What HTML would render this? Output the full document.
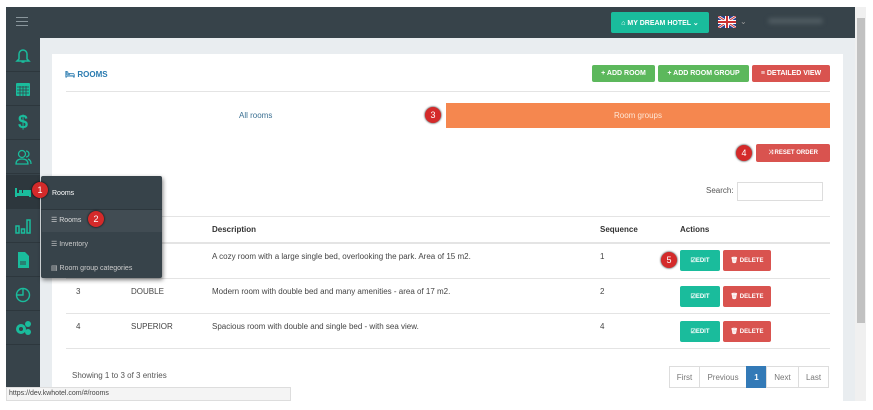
<!DOCTYPE html><html><head><style>
*{margin:0;padding:0;box-sizing:border-box}
body{width:873px;height:410px;background:#fff;font-family:"Liberation Sans",sans-serif;position:relative;overflow:hidden;font-size:8px;color:#444}
.a{position:absolute}
.btn{position:absolute;color:#fff;font-weight:bold;font-size:7px;display:flex;align-items:center;justify-content:center;border-radius:2px}
.g{background:#5cb85c}.r{background:#d9534f}.t{background:#1abc9c}
.badge{position:absolute;width:16px;height:16px;border-radius:50%;background:#d42a2a;color:#fff;font-size:9px;display:flex;align-items:center;justify-content:center;box-shadow:0 0 2px #000}
.sb{position:absolute;left:6px;width:34px;height:34px;border-bottom:1px solid #2d373d;display:flex;align-items:center;justify-content:center}
.sb svg{width:18px;height:18px}
.line{position:absolute;left:66px;width:764px;height:1px;background:#e4e4e4}
.pg{position:absolute;top:366px;height:22px;border:1px solid #ddd;display:flex;align-items:center;justify-content:center;color:#777;font-size:8px;background:#fff}
</style></head><body>
<div class="a" style="left:6px;top:7px;width:849px;height:31px;background:#37434a"></div>
<div class="a" style="left:16px;top:17px;width:12px;height:1px;background:#8a969c;box-shadow:0 4px 0 #8a969c,0 8px 0 #8a969c"></div>
<div class="btn t" style="left:611px;top:12px;width:98px;height:21px">⌂ MY DREAM HOTEL ⌄</div>
<svg class="a" style="left:718px;top:16px" width="18" height="12" viewBox="0 0 18 12"><rect width="18" height="12" fill="#2a3f8f"/><path d="M0 0L18 12M18 0L0 12" stroke="#fff" stroke-width="2.5"/><path d="M0 0L18 12M18 0L0 12" stroke="#c33" stroke-width="1"/><path d="M9 0V12M0 6H18" stroke="#fff" stroke-width="4"/><path d="M9 0V12M0 6H18" stroke="#c33" stroke-width="2"/></svg>
<div class="a" style="left:740px;top:17px;color:#999;font-size:8px">⌄</div>
<div class="a" style="left:768px;top:18px;width:55px;height:6px;background:#4e5a60;border-radius:3px;filter:blur(2px)"></div>
<div class="a" style="left:855px;top:7px;width:11px;height:394px;background:#f0f0f0"></div>
<div class="a" style="left:857px;top:18px;width:8px;height:305px;background:#c1c1c1"></div>
<div class="a" style="left:6px;top:38px;width:34px;height:363px;background:#37434a"></div>
<div class="a" style="left:40px;top:38px;width:815px;height:363px;background:#e9edf0"></div>
<div class="sb" style="top:38px"><svg viewBox="0 0 18 18" fill="none" stroke="#1abc9c" stroke-width="1.5"><path d="M5 13V8a4 4 0 0 1 8 0v5l2 2H3z M7.5 16h3"/></svg></div>
<div class="sb" style="top:72px"><svg viewBox="0 0 18 18" fill="#1abc9c"><rect x="2" y="3" width="14" height="13" rx="1"/><path d="M3 7h12M3 10h12M3 13h12M6 6v10M9 6v10M12 6v10" stroke="#37434a" stroke-width=".8"/></svg></div>
<div class="sb" style="top:106px"><span style="color:#1abc9c;font-size:18px;font-weight:bold">$</span></div>
<div class="sb" style="top:140px"><svg viewBox="0 0 18 18" fill="none" stroke="#1abc9c" stroke-width="1.3"><circle cx="8" cy="6" r="3.5"/><path d="M2 16c0-4 3-5 6-5s6 1 6 5z"/><path d="M12 3a3 3 0 0 1 0 6M14 11c2 1 3 2 3 5"/></svg></div>
<div class="sb" style="top:175px;background:#2d373d"><svg viewBox="0 0 18 18" fill="#1abc9c"><rect x="1" y="5" width="2" height="9"/><rect x="1" y="10" width="16" height="3"/><rect x="5" y="7" width="3" height="3"/><rect x="9" y="7" width="8" height="3"/><rect x="15" y="10" width="2" height="4"/></svg></div>
<div class="sb" style="top:209px"><svg viewBox="0 0 18 18" fill="none" stroke="#1abc9c" stroke-width="1.5"><rect x="2" y="9" width="3" height="7"/><rect x="7.5" y="12" width="3" height="4"/><rect x="13" y="3" width="3" height="13"/></svg></div>
<div class="sb" style="top:243px"><svg viewBox="0 0 18 18" fill="#1abc9c"><path d="M4 1h7l4 4v12H4z"/><path d="M6 11h6M6 13h6" stroke="#37434a"/></svg></div>
<div class="sb" style="top:277px"><svg viewBox="0 0 18 18" fill="none" stroke="#1abc9c" stroke-width="1.4"><circle cx="9" cy="10" r="6.5"/><path d="M9 3.5V10H2.5"/></svg></div>
<div class="sb" style="top:311px"><svg viewBox="0 0 18 18" fill="#1abc9c"><circle cx="7" cy="10" r="5"/><circle cx="14" cy="5" r="3"/><circle cx="14" cy="13" r="3"/><circle cx="7" cy="10" r="2" fill="#37434a"/></svg></div>
<div class="a" style="left:52px;top:54px;width:791px;height:347px;background:#fff"></div>
<div class="a" style="left:65px;top:70px;color:#2a7bb0;font-weight:bold;font-size:8px">🛏︎ ROOMS</div>
<div class="btn g" style="left:592px;top:65px;width:63px;height:17px">+ ADD ROOM</div>
<div class="btn g" style="left:658px;top:65px;width:91px;height:17px">+ ADD ROOM GROUP</div>
<div class="btn r" style="left:752px;top:65px;width:78px;height:17px">≡ DETAILED VIEW</div>
<div class="line" style="top:91px"></div>
<div class="a" style="left:239px;top:111px;color:#3a6f92;font-size:8px">All rooms</div>
<div class="a" style="left:446px;top:103px;width:384px;height:25px;background:#f5874f;color:#fde6d6;display:flex;align-items:center;justify-content:center;font-size:8px">Room groups</div>
<div class="btn r" style="left:756px;top:144px;width:74px;height:18px;font-size:6px">⤨ RESET ORDER</div>
<div class="a" style="left:706px;top:186px;font-size:8px;color:#555">Search:</div>
<div class="a" style="left:737px;top:182px;width:86px;height:19px;border:1px solid #ddd"></div>
<div class="line" style="top:216px"></div>
<div class="a" style="left:212px;top:225px;font-weight:bold;font-size:8px;color:#333">Description</div>
<div class="a" style="left:600px;top:225px;font-weight:bold;font-size:8px;color:#333">Sequence</div>
<div class="a" style="left:680px;top:225px;font-weight:bold;font-size:8px;color:#333">Actions</div>
<div class="line" style="top:242px;height:2px"></div>
<div class="a" style="left:212px;top:252px">A cozy room with a large single bed, overlooking the park. Area of 15 m2.</div>
<div class="a" style="left:600px;top:252px">1</div>
<div class="line" style="top:278px"></div>
<div class="a" style="left:76px;top:287px">3</div><div class="a" style="left:131px;top:287px">DOUBLE</div>
<div class="a" style="left:212px;top:287px">Modern room with double bed and many amenities - area of 17 m2.</div>
<div class="a" style="left:600px;top:287px">2</div>
<div class="line" style="top:313px"></div>
<div class="a" style="left:76px;top:322px">4</div><div class="a" style="left:131px;top:322px">SUPERIOR</div>
<div class="a" style="left:212px;top:322px">Spacious room with double and single bed - with sea view.</div>
<div class="a" style="left:600px;top:322px">4</div>
<div class="line" style="top:348px"></div>
<div class="btn t" style="left:680px;top:250px;width:40px;height:21px;font-size:6px">☑EDIT</div>
<div class="btn r" style="left:723px;top:250px;width:48px;height:21px;font-size:6px">🗑︎ DELETE</div>
<div class="btn t" style="left:680px;top:286px;width:40px;height:21px;font-size:6px">☑EDIT</div>
<div class="btn r" style="left:723px;top:286px;width:48px;height:21px;font-size:6px">🗑︎ DELETE</div>
<div class="btn t" style="left:680px;top:321px;width:40px;height:21px;font-size:6px">☑EDIT</div>
<div class="btn r" style="left:723px;top:321px;width:48px;height:21px;font-size:6px">🗑︎ DELETE</div>
<div class="a" style="left:72px;top:371px;font-size:8px;color:#555">Showing 1 to 3 of 3 entries</div>
<div class="pg" style="left:669px;width:31px">First</div>
<div class="pg" style="left:699px;width:48px">Previous</div>
<div class="pg" style="left:746px;width:21px;background:#337ab7;color:#fff;border-color:#337ab7;font-weight:bold">1</div>
<div class="pg" style="left:766px;width:33px">Next</div>
<div class="pg" style="left:798px;width:31px">Last</div>
<div class="a" style="left:41px;top:176px;width:121px;height:102px;background:#37434a;box-shadow:1px 2px 4px rgba(0,0,0,.5);border-radius:2px"></div>
<div class="a" style="left:41px;top:209px;width:121px;height:1px;background:#2d373d"></div>
<div class="a" style="left:42px;top:210px;width:120px;height:22px;background:#414c53"></div>
<div class="a" style="left:52px;top:190px;color:#fff;font-size:7px">Rooms</div>
<div class="a" style="left:51px;top:216px;color:#ddd;font-size:7px">☰ Rooms</div>
<div class="a" style="left:51px;top:240px;color:#ccc;font-size:7px">☰ Inventory</div>
<div class="a" style="left:51px;top:264px;color:#ccc;font-size:7px">▤ Room group categories</div>
<div class="badge" style="left:32px;top:182px">1</div>
<div class="badge" style="left:88px;top:211px">2</div>
<div class="badge" style="left:425px;top:107px">3</div>
<div class="badge" style="left:736px;top:145px">4</div>
<div class="badge" style="left:661px;top:252px">5</div>
<div class="a" style="left:6px;top:387px;width:285px;height:14px;background:#f4f4f4;border:1px solid #ddd;font-size:7px;color:#444;padding:2px 2px">https://dev.kwhotel.com/#/rooms</div>
</body></html>
